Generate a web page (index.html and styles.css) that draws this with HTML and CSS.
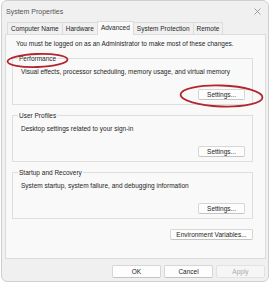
FILE: index.html
```html
<!DOCTYPE html>
<html lang="en">
<head>
  <meta charset="UTF-8">
  <title>System Properties</title>
  <link rel="stylesheet" href="styles.css">
</head>
<body>
  <div class="window">
    <div class="titlebar">
      <span class="title">System Properties</span>
      <svg class="close" width="7" height="7" viewBox="0 0 7 7">
        <path d="M0.5 0.5L6.5 6.5M6.5 0.5L0.5 6.5" stroke="#8a8a8a" stroke-width="0.8" fill="none"/>
      </svg>
    </div>

    <div class="tabs">
      <div class="tab">Computer Name</div>
      <div class="tab">Hardware</div>
      <div class="tab active">Advanced</div>
      <div class="tab">System Protection</div>
      <div class="tab">Remote</div>
    </div>

    <div class="panel">
      <p class="notice">You must be logged on as an Administrator to make most of these changes.</p>

      <fieldset class="group">
        <legend>Performance</legend>
        <p class="desc">Visual effects, processor scheduling, memory usage, and virtual memory</p>
        <div class="group-actions"><button class="btn">Settings...</button></div>
      </fieldset>

      <fieldset class="group">
        <legend>User Profiles</legend>
        <p class="desc">Desktop settings related to your sign-in</p>
        <div class="group-actions"><button class="btn">Settings...</button></div>
      </fieldset>

      <fieldset class="group">
        <legend>Startup and Recovery</legend>
        <p class="desc">System startup, system failure, and debugging information</p>
        <div class="group-actions"><button class="btn">Settings...</button></div>
      </fieldset>

      <div class="env-row"><button class="btn btn-wide">Environment Variables...</button></div>
    </div>

    <div class="footer">
      <button class="btn btn-foot">OK</button>
      <button class="btn btn-foot">Cancel</button>
      <button class="btn btn-foot" disabled>Apply</button>
    </div>
  </div>

  <!-- red hand-drawn annotations over the dialog -->
  <svg class="marks" width="270" height="282" viewBox="0 0 270 282">
    <ellipse cx="37.5" cy="60.5" rx="30" ry="6.5" transform="rotate(-2 37.5 60.5)"/>
    <ellipse cx="221.5" cy="96" rx="41" ry="10.5" transform="rotate(2 221.5 96)"/>
  </svg>
</body>
</html>
```

FILE: styles.css
```css
body {
  margin: 0;
  background: #fff;
  font-family: "Liberation Sans", Arial, sans-serif;
  font-size: 6.5px;
  color: #262626;
  position: relative;
}
.window {
  box-sizing: border-box;
  width: 268px;
  height: 282px;
  margin-left: 1px;
  background: #f0f0f0;
  border: 1px solid #cfcfcf;
  border-radius: 6px;
  display: flex;
  flex-direction: column;
}
.titlebar {
  height: 20px;
  display: flex;
  align-items: center;
  justify-content: space-between;
  padding: 0 7px 0 4px;
}
.title {
  font-size: 7px;
  color: #555;
}
.tabs {
  display: flex;
  align-items: flex-end;
  height: 13px;
  padding-left: 5px;
}
.tab {
  box-sizing: border-box;
  height: 12px;
  line-height: 11px;
  padding: 0 3px;
  border: 1px solid #dcdcdc;
  border-bottom: none;
  margin-right: -1px;
  background: #f0f0f0;
  white-space: nowrap;
}
.tab.active {
  height: 14px;
  line-height: 12px;
  background: #f9f9f9;
  margin-bottom: -1px;
  position: relative;
  z-index: 1;
}
.panel {
  box-sizing: border-box;
  height: 225px;
  margin-left: 3px;
  width: 261px;
  background: #f9f9f9;
  border: 1px solid #dcdcdc;
  padding-top: 4px;
}
.notice {
  margin: 0 0 0 10px;
  line-height: 9px;
  white-space: nowrap;
}
.group {
  box-sizing: border-box;
  width: 241px;
  margin: 6px 0 0 6px;
  padding: 0 7px 4px 7px;
  border: 1px solid #dedede;
  min-width: 0;
}
.group legend {
  padding: 0 1px;
  margin-left: -2px;
  line-height: 9px;
}
.desc {
  margin: 4px 0 0 1px;
  line-height: 9px;
  white-space: nowrap;
}
.group-actions {
  display: flex;
  justify-content: flex-end;
  margin-top: 13px;
}
.btn {
  box-sizing: border-box;
  width: 47px;
  height: 11px;
  padding: 0;
  font-family: inherit;
  font-size: 6.5px;
  color: #262626;
  background: #fdfdfd;
  border: 1px solid #d6d6d6;
  border-bottom-color: #c4c4c4;
  border-radius: 2px;
}
.btn-wide {
  width: 83px;
}
.env-row {
  display: flex;
  justify-content: flex-end;
  margin: 10px 12px 0 0;
}
.footer {
  display: flex;
  justify-content: flex-end;
  gap: 3px;
  padding: 6px 3px 0 0;
}
.btn-foot {
  width: 49px;
  height: 13px;
}
.btn-foot:disabled {
  background: #f6f6f6;
  color: #a8a8a8;
  border-color: #e2e2e2;
}
.marks {
  position: absolute;
  left: 0;
  top: 0;
  pointer-events: none;
}
.marks ellipse {
  fill: none;
  stroke: #b3262c;
  stroke-width: 1.8;
}
```
